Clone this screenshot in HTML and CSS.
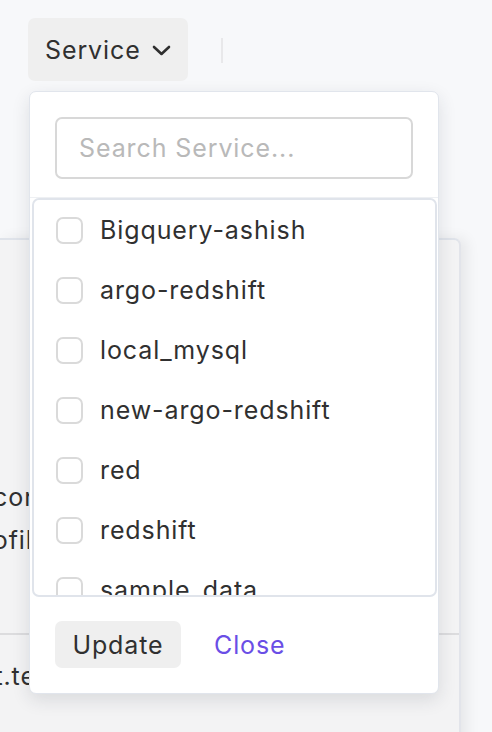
FILE: index.html
```html
<!DOCTYPE html>
<html>
<head>
<meta charset="utf-8">
<link rel="stylesheet" href="styles.css">
</head>
<body>
<div class="page">
  <div class="toolbar">
    <button class="filter-btn">Service
      <svg class="chev" width="19" height="11" viewBox="0 0 19 11"><path d="M2 2 L9.5 9 L17 2" fill="none" stroke="#2f2f2f" stroke-width="2.6" stroke-linecap="round" stroke-linejoin="round"/></svg>
    </button>
    <span class="vdivider"></span>
  </div>
  <div class="card">
    <div class="card-body">
      <div class="line l1">Record</div>
      <div class="line l2">Profile</div>
    </div>
    <div class="card-row">
      <div class="line l3">test.test</div>
    </div>
  </div>

  <div class="dropdown">
    <div class="search-wrap">
      <input class="search" type="text" placeholder="Search Service...">
    </div>
    <div class="list">
      <label class="item"><span class="box"></span><span>Bigquery-ashish</span></label>
      <label class="item"><span class="box"></span><span>argo-redshift</span></label>
      <label class="item"><span class="box"></span><span>local_mysql</span></label>
      <label class="item"><span class="box"></span><span>new-argo-redshift</span></label>
      <label class="item"><span class="box"></span><span>red</span></label>
      <label class="item"><span class="box"></span><span>redshift</span></label>
      <label class="item"><span class="box"></span><span>sample_data</span></label>
      <label class="item"><span class="box"></span><span>snowflake</span></label>
    </div>
    <div class="footer">
      <button class="update">Update</button>
      <button class="close">Close</button>
    </div>
  </div>
</div>
</body>
</html>
```

FILE: styles.css
```css
* { box-sizing: border-box; }
html, body { margin: 0; padding: 0; }
body {
  width: 492px;
  height: 732px;
  overflow: hidden;
  background: #f7f8fa;
  font-family: Inter, "Noto Sans", "Liberation Sans", sans-serif;
  color: #303030;
}
.page {
  position: relative;
  width: 492px;
  height: 732px;
  overflow: hidden;
}
.toolbar {
  display: flex;
  align-items: center;
  padding: 18px 0 0 28px;
  height: 81px;
}
.filter-btn {
  display: flex;
  align-items: center;
  gap: 11px;
  height: 63px;
  width: 160px;
  padding: 0 0 0 17px;
  border: none;
  border-radius: 7px;
  background: #efefef;
  font-family: inherit;
  font-size: 25px;
  letter-spacing: 0.9px;
  color: #303030;
}
.chev { margin-top: 2px; flex: none; }
.vdivider {
  display: block;
  width: 2px;
  height: 25px;
  margin-left: 33px;
  margin-top: 2px;
  background: #e8e8ea;
}
.card {
  margin-top: 157px;
  width: 461px;
  height: 520px;
  background: #f3f3f4;
  border-top: 2px solid #dfe3ea;
  border-right: 2px solid #e2e4ea;
  border-top-right-radius: 7px;
  box-shadow: 6px 0 14px rgba(0,0,0,0.07);
  overflow: hidden;
}
.card-body {
  height: 395px;
  border-bottom: 2px solid #dcdcde;
  padding-top: 236px;
}
.line {
  font-size: 25px;
  letter-spacing: 0.9px;
  color: #303030;
  white-space: nowrap;
  line-height: 43px;
}
.l1 { margin-left: -39px; }
.l2 { margin-left: -34px; }
.l3 { margin-left: -44px; margin-top: 20px; }

.dropdown {
  position: absolute;
  left: 29px;
  top: 91px;
  width: 410px;
  height: 603px;
  background: #fff;
  border: 1px solid #e1e5ec;
  border-radius: 7px;
  box-shadow: 0 6px 18px rgba(30,40,60,0.12);
  display: flex;
  flex-direction: column;
}
.search-wrap {
  padding: 25px 25px 18px 25px;
  border-bottom: 1px solid #eef0f3;
}
.search {
  display: block;
  width: 358px;
  height: 62px;
  border: 2px solid #d8d8d8;
  border-radius: 7px;
  padding: 0 22px;
  font-family: inherit;
  font-size: 25px;
  letter-spacing: 0.9px;
  color: #303030;
  outline: none;
}
.search::placeholder { color: #b9b9b9; }
.list {
  margin: 0 1px 0 2px;
  height: 399px;
  border: 2px solid #e0e4eb;
  border-radius: 7px;
  overflow: hidden;
  padding-top: 0;
}
.item {
  display: flex;
  align-items: center;
  gap: 17px;
  height: 60px;
  padding-left: 22px;
  font-size: 25px;
  letter-spacing: 0.9px;
  color: #303030;
}
.box {
  display: block;
  width: 27px;
  height: 27px;
  border: 2px solid #dadada;
  border-radius: 7px;
  background: #fff;
  flex: none;
}
.footer {
  display: flex;
  align-items: center;
  gap: 33px;
  padding: 24px 25px 0 25px;
}
.update {
  height: 47px;
  width: 126px;
  border: none;
  border-radius: 7px;
  background: #efefef;
  font-family: inherit;
  font-size: 25px;
  letter-spacing: 0.9px;
  color: #303030;
  padding: 0;
}
.close {
  border: none;
  background: none;
  padding: 0;
  font-family: inherit;
  font-size: 25px;
  letter-spacing: 0.9px;
  color: #6a4ee6;
}
```
